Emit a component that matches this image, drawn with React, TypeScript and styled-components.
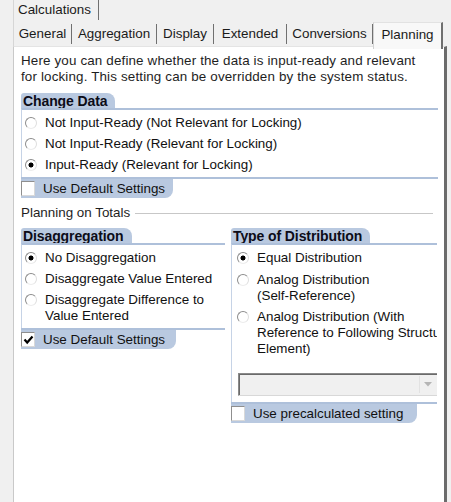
import React from "react";
import styled, { createGlobalStyle } from "styled-components";

const Global = createGlobalStyle`
  html, body { margin: 0; padding: 0; background: #f0f0f0; }
  body {
    font-family: "Liberation Sans", Arial, sans-serif;
    font-size: 13.4px;
    color: #000;
  }
  * { box-sizing: border-box; }
`;

const Window = styled.div`
  width: 451px;
  height: 502px;
  overflow: hidden;
  background: #f0f0f0;
  padding-left: 13px;
  padding-right: 4px;
  display: flex;
  flex-direction: column;
`;

const TabRow = styled.div<{ $h: number }>`
  display: flex;
  align-items: flex-end;
  height: ${(p) => p.$h}px;
  border-left: 1px solid #d6d6d6;
`;

const Tab = styled.div<{ $w?: number; $active?: boolean }>`
  flex: none;
  width: ${(p) => (p.$w ? `${p.$w}px` : "auto")};
  height: ${(p) => (p.$active ? 27 : 20)}px;
  line-height: ${(p) => (p.$active ? 24 : 20)}px;
  padding: ${(p) => (p.$w ? "0" : "0 7px 0 4px")};
  text-align: ${(p) => (p.$w ? "center" : "left")};
  color: #1b1b1b;
  background: ${(p) => (p.$active ? "#f8f8f8" : "#f0f0f0")};
  border-right: ${(p) => (p.$active ? "2px solid #6f6f6f" : "1px solid #707070")};
  border-left: ${(p) => (p.$active ? "1px solid #d2d2d2" : "none")};
  border-top: ${(p) => (p.$active ? "1px solid #e2e2e2" : "none")};
  margin-bottom: ${(p) => (p.$active ? -3 : 2)}px;
  position: relative;
  z-index: ${(p) => (p.$active ? 2 : 1)};
  white-space: nowrap;
`;

const Panel = styled.div`
  flex: 1;
  background: #fff;
  border-left: 1px solid #c9c9c9;
  border-right: 3px solid #6b6b6b;
  border-top: 1px solid #e4e4e4;
  padding: 6px 6px 0 7px;
  display: flex;
  flex-direction: column;
`;

const Intro = styled.p`
  margin: 0;
  line-height: 16px;
  color: #1e1e1e;
  letter-spacing: 0.15px;
  white-space: nowrap;
`;

const Group = styled.div<{ $mt?: number }>`
  margin-top: ${(p) => p.$mt ?? 0}px;
  display: flex;
  flex-direction: column;
  overflow: hidden;
  min-width: 0;
`;

const Legend = styled.div`
  align-self: flex-start;
  height: 15px;
  line-height: 16px;
  padding: 0 8px 0 2px;
  background: #b9c9e0;
  border-radius: 3px 8px 0 0;
  font-weight: bold;
  font-size: 14px;
  color: #0c0c18;
  letter-spacing: -0.1px;
  white-space: nowrap;
`;

const GroupBody = styled.div<{ $pl?: number; $pb?: number }>`
  border-top: 2px solid #aec0da;
  border-left: 1px solid #c6d3e6;
  padding: 2px 0 ${(p) => p.$pb ?? 2}px ${(p) => p.$pl ?? 3}px;
  display: flex;
  flex-direction: column;
`;

const GroupFoot = styled.div`
  border-top: 2px solid #aec0da;
  display: flex;
`;

const CheckRow = styled.label<{ $pr?: number }>`
  display: inline-flex;
  align-items: center;
  gap: 8px;
  height: 19px;
  padding: 0 ${(p) => p.$pr ?? 10}px 0 0;
  background: #b9c9e0;
  border-radius: 0 0 8px 0;
  color: #111;
  white-space: nowrap;
`;

const Box = styled.span`
  width: 14px;
  height: 15px;
  background: #fff;
  border: 1px solid #8f8f8f;
  border-right-color: #d9d9d9;
  border-bottom-color: #d9d9d9;
  display: flex;
  align-items: center;
  justify-content: center;
  flex: none;
`;

const RadioRow = styled.label<{ $mt?: number }>`
  display: flex;
  align-items: flex-start;
  gap: 8px;
  padding: 2.5px 0;
  margin-top: ${(p) => p.$mt ?? 0}px;
  line-height: 16px;
  color: #111;
  white-space: nowrap;
`;

const RadioDot = styled.span<{ $checked?: boolean }>`
  flex: none;
  margin-top: 2px;
  width: 12px;
  height: 12px;
  border-radius: 50%;
  border: 1px solid;
  border-color: #8c8c8c #dedede #ececec #8c8c8c;
  background: ${(p) =>
    p.$checked
      ? "radial-gradient(circle, #000 0 2.2px, #fff 2.8px)"
      : "#fff"};
`;

const TotalsHead = styled.div`
  margin-top: 7px;
  display: flex;
  align-items: center;
  gap: 5px;
  line-height: 16px;
  color: #1e1e1e;
  padding-right: 5px;
`;

const Rule = styled.span`
  flex: 1;
  height: 1px;
  background: #c7c7c7;
`;

const Columns = styled.div`
  margin-top: 7px;
  display: grid;
  grid-template-columns: 204px 206px;
  column-gap: 6px;
  align-items: start;
`;

const Select = styled.div`
  margin: 14px 0 6px 1px;
  width: 201px;
  height: 23px;
  background: #f0f0f0;
  border: 1px solid #8a8a8a;
  border-right-color: #c8c8c8;
  border-bottom-color: #d8d8d8;
  box-shadow: inset 1px 1px 0 #6a6a6a;
  display: flex;
  justify-content: flex-end;
  padding: 2px 2px 2px 0;
`;

const SelectButton = styled.span`
  width: 17px;
  display: flex;
  align-items: center;
  justify-content: center;
  border-left: 1px solid #e2e2e2;
`;

const Radio = ({ label, checked, mt }: { label: React.ReactNode; checked?: boolean; mt?: number }) => (
  <RadioRow $mt={mt}>
    <RadioDot $checked={checked} />
    <span>{label}</span>
  </RadioRow>
);

const Check = ({ label, checked, pr }: { label: string; checked?: boolean; pr?: number }) => (
  <CheckRow $pr={pr}>
    <Box>
      {checked && (
        <svg width="11" height="10" viewBox="0 0 11 10">
          <path d="M1.5 4.5 L4.2 7.5 L9.5 1.5" fill="none" stroke="#000" strokeWidth="2.2" />
        </svg>
      )}
    </Box>
    {label}
  </CheckRow>
);

export default function App() {
  return (
    <>
      <Global />
      <Window>
        <TabRow $h={22}>
          <Tab>Calculations</Tab>
        </TabRow>
        <TabRow $h={24}>
          <Tab $w={58}>General</Tab>
          <Tab $w={85}>Aggregation</Tab>
          <Tab $w={57}>Display</Tab>
          <Tab $w={73}>Extended</Tab>
          <Tab $w={86}>Conversions</Tab>
          <Tab $w={70} $active>
            Planning
          </Tab>
        </TabRow>
        <Panel>
          <Intro>
            Here you can define whether the data is input-ready and relevant
            <br />
            for locking. This setting can be overridden by the system status.
          </Intro>

          <Group $mt={8}>
            <Legend>Change Data</Legend>
            <GroupBody>
              <Radio label="Not Input-Ready (Not Relevant for Locking)" />
              <Radio label="Not Input-Ready (Relevant for Locking)" />
              <Radio label="Input-Ready (Relevant for Locking)" checked />
            </GroupBody>
            <GroupFoot>
              <Check label="Use Default Settings" pr={8} />
            </GroupFoot>
          </Group>

          <TotalsHead>
            Planning on Totals
            <Rule />
          </TotalsHead>

          <Columns>
            <Group>
              <Legend>Disaggregation</Legend>
              <GroupBody>
                <Radio label="No Disaggregation" checked />
                <Radio label="Disaggregate Value Entered" />
                <Radio
                  label={
                    <>
                      Disaggregate Difference to
                      <br />
                      Value Entered
                    </>
                  }
                />
              </GroupBody>
              <GroupFoot>
                <Check label="Use Default Settings" checked pr={11} />
              </GroupFoot>
            </Group>

            <Group>
              <Legend>Type of Distribution</Legend>
              <GroupBody $pl={5} $pb={0}>
                <Radio label="Equal Distribution" checked />
                <Radio
                  mt={1}
                  label={
                    <>
                      Analog Distribution
                      <br />
                      (Self-Reference)
                    </>
                  }
                />
                <Radio
                  label={
                    <>
                      Analog Distribution (With
                      <br />
                      Reference to Following Structure
                      <br />
                      Element)
                    </>
                  }
                />
                <Select>
                  <SelectButton>
                    <svg width="8" height="5" viewBox="0 0 8 5">
                      <path d="M0 0 H8 L4 4.5 Z" fill="#b5b5b5" />
                    </svg>
                  </SelectButton>
                </Select>
              </GroupBody>
              <GroupFoot>
                <Check label="Use precalculated setting" pr={14} />
              </GroupFoot>
            </Group>
          </Columns>
        </Panel>
      </Window>
    </>
  );
}
